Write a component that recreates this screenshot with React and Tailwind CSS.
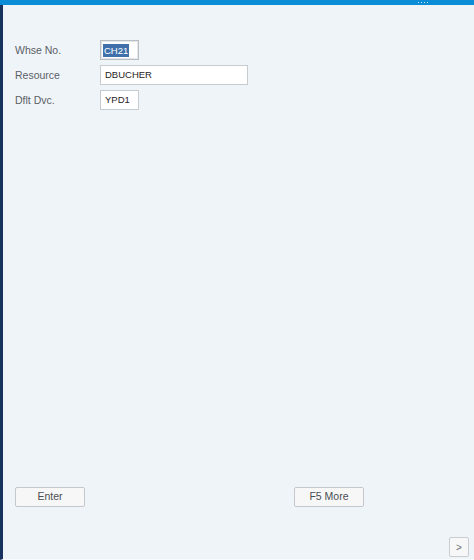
import React from 'react';

const FIELDS = [
  { label: 'Whse No.', value: 'CH21', width: 'w-[39px]', focused: true },
  { label: 'Resource', value: 'DBUCHER', width: 'w-[148px]' },
  { label: 'Dflt Dvc.', value: 'YPD1', width: 'w-[39px]' },
];

export default function App() {
  return (
    <div
      className="flex h-[560px] w-full flex-col bg-[#eff4f9] text-[#32363a]"
      style={{ fontFamily: '"Liberation Sans", Arial, sans-serif' }}
    >
      {/* Shell bar */}
      <div className="relative h-[5px] shrink-0 bg-[#0a8cd6]">
        <div className="absolute left-[418px] top-[2px] flex gap-[2px]">
          <span className="h-px w-px bg-[#cfe6f7]" />
          <span className="h-px w-px bg-[#cfe6f7]" />
          <span className="h-px w-px bg-[#cfe6f7]" />
          <span className="h-px w-px bg-[#cfe6f7]" />
        </div>
      </div>

      <div className="flex flex-1 flex-col border-l-[3px] border-b border-l-[#17325f] border-b-[#f8fafc]">
        {/* Form */}
        <div className="flex flex-col gap-[5px] pl-[12px] pt-[35px]">
          {FIELDS.map((f) => (
            <div key={f.label} className="flex h-[20px] items-center">
              <span className="w-[85px] pt-[2px] text-[10.5px] text-[#5b6065]">{f.label}</span>
              {f.focused ? (
                <div className={`flex h-[20px] ${f.width} items-center border border-[#b9bec3] bg-white px-[2px] shadow-[inset_0_0_0_1px_#e4e7ea]`}>
                  <span className="bg-[#3f70aa] px-px text-[9.5px] leading-[13px] text-white">{f.value}</span>
                </div>
              ) : (
                <div className={`flex h-[20px] ${f.width} items-center border border-[#c6cbd0] bg-white px-[4px]`}>
                  <span className="text-[9.5px] text-[#1f2124]">{f.value}</span>
                </div>
              )}
            </div>
          ))}
        </div>

        {/* Function keys */}
        <div className="mt-auto flex pl-[12px]">
          <button className="h-[20px] w-[70px] rounded-[2px] border border-[#c4c8cc] bg-[#f7f7f7] text-[10.5px] text-[#4a4e53]">
            Enter
          </button>
          <button className="ml-[209px] h-[20px] w-[70px] rounded-[2px] border border-[#c4c8cc] bg-[#f7f7f7] text-[10.5px] text-[#4a4e53]">
            F5 More
          </button>
        </div>

        {/* Page nav */}
        <div className="mb-[2px] mt-[30px] flex justify-end pr-[5px]">
          <button className="h-[20px] w-[20px] rounded-[2px] border border-[#c9cdd1] bg-[#f7f7f7] text-[10px] text-[#6a6e73]">
            &gt;
          </button>
        </div>
      </div>
    </div>
  );
}
